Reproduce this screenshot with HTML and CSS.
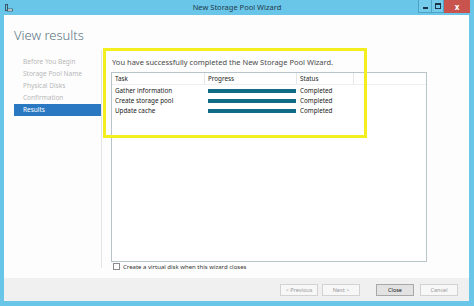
FILE: index.html
```html
<!DOCTYPE html>
<html>
<head>
    <title>New Storage Pool Wizard</title>
    <link rel="stylesheet" href="styles.css">
</head>
<body>
    <div class="window">
        <div class="titlebar">
            <svg class="app-icon" width="8" height="8" viewBox="0 0 8 8">
                <rect x="0.5" y="0.5" width="2" height="6" fill="none" stroke="#3a5566" stroke-width="1"/>
                <rect x="2.5" y="5" width="5" height="2" fill="#ffffff" stroke="#3a5566" stroke-width="0.8"/>
            </svg>
            <div class="title">New Storage Pool Wizard</div>
            <div class="controls">
                <div class="ctl ctl-min"><span></span></div>
                <div class="ctl ctl-max"><span></span></div>
                <div class="ctl ctl-close">x</div>
            </div>
        </div>

        <div class="client">
            <div class="heading">View results</div>

            <div class="body">
                <div class="nav">
                    <div class="nav-item">Before You Begin</div>
                    <div class="nav-item">Storage Pool Name</div>
                    <div class="nav-item">Physical Disks</div>
                    <div class="nav-item">Confirmation</div>
                    <div class="nav-item active">Results</div>
                </div>

                <div class="main">
                    <div class="message">You have successfully completed the New Storage Pool Wizard.</div>

                    <div class="list">
                        <div class="list-head">
                            <div class="col col-task">Task</div>
                            <div class="col col-progress">Progress</div>
                            <div class="col col-status">Status</div>
                            <div class="col col-rest"></div>
                        </div>
                        <div class="list-row">
                            <div class="col col-task">Gather information</div>
                            <div class="col col-progress"><div class="bar"></div></div>
                            <div class="col col-status">Completed</div>
                        </div>
                        <div class="list-row">
                            <div class="col col-task">Create storage pool</div>
                            <div class="col col-progress"><div class="bar"></div></div>
                            <div class="col col-status">Completed</div>
                        </div>
                        <div class="list-row">
                            <div class="col col-task">Update cache</div>
                            <div class="col col-progress"><div class="bar"></div></div>
                            <div class="col col-status">Completed</div>
                        </div>
                    </div>

                    <label class="check-row">
                        <span class="checkbox"></span>
                        Create a virtual disk when this wizard closes
                    </label>
                </div>
            </div>

            <div class="buttons">
                <button class="btn" disabled>&lt; Previous</button>
                <button class="btn" disabled>Next &gt;</button>
                <button class="btn btn-default">Close</button>
                <button class="btn" disabled>Cancel</button>
            </div>
        </div>

        <div class="highlight"></div>
    </div>
</body>
</html>
```

FILE: styles.css
```css
body {
    margin: 0;
    background: #6ac6e8;
    font-family: "Noto Sans", "Open Sans", sans-serif;
}
.window {
    position: relative;
    width: 474px;
    height: 306px;
    display: flex;
    flex-direction: column;
}
.titlebar {
    height: 15px;
    display: flex;
    align-items: center;
    position: relative;
}
.app-icon {
    margin-left: 5px;
}
.title {
    position: absolute;
    left: 0;
    right: 0;
    text-align: center;
    font-size: 7.5px;
    color: #1f3a4c;
    line-height: 15px;
}
.controls {
    position: absolute;
    top: 0;
    right: 4px;
    display: flex;
}
.ctl {
    height: 13px;
    display: flex;
    align-items: center;
    justify-content: center;
    box-sizing: border-box;
}
.ctl-min, .ctl-max {
    width: 13px;
    border: 1px solid #4da3c4;
    border-top: none;
    background: #74cbeb;
}
.ctl-min {
    border-right: none;
}
.ctl-min span {
    width: 5px;
    height: 2px;
    margin-top: 4px;
    background: #1d3444;
}
.ctl-max span {
    width: 4px;
    height: 3px;
    border: 1px solid #1d3444;
    border-top-width: 2px;
}
.ctl-close {
    width: 26px;
    background: #c9534d;
    color: #ffffff;
    font-size: 8px;
    font-weight: bold;
    line-height: 1;
}
.client {
    flex: 1;
    margin: 0 5px 5px 4px;
    background: #fdfdfd;
    display: flex;
    flex-direction: column;
}
.heading {
    height: 35px;
    padding-left: 10px;
    box-sizing: border-box;
    padding-top: 12px;
    font-size: 13px;
    font-weight: 300;
    color: #5a7584;
    line-height: 16px;
}
.body {
    flex: 1;
    display: flex;
}
.nav {
    width: 97px;
    padding-top: 6px;
    margin-bottom: 10px;
    border-right: 1px solid #e4e4e4;
}
.nav-item {
    margin-left: 10px;
    height: 12px;
    line-height: 12px;
    padding-left: 9px;
    font-size: 6.5px;
    color: #b8b8b8;
}
.nav-item.active {
    background: #2a78c2;
    color: #ffffff;
}
.main {
    flex: 1;
    padding: 6px 42px 0 9px;
}
.message {
    height: 12px;
    line-height: 12px;
    font-size: 7.5px;
    color: #4a4a4a;
    padding-left: 1px;
    margin-bottom: 4px;
}
.list {
    height: 190px;
    box-sizing: border-box;
    border: 1px solid #b8c4cc;
    background: #ffffff;
}
.list-head, .list-row {
    display: flex;
    font-size: 6.3px;
    color: #222222;
}
.list-head {
    height: 11px;
    line-height: 11px;
    border-bottom: 1px solid #eeeeee;
    margin-bottom: 1px;
}
.list-head .col {
    border-right: 1px solid #e6e6e6;
}
.list-row {
    height: 10px;
    line-height: 10px;
}
.col {
    padding-left: 3px;
    box-sizing: border-box;
    white-space: nowrap;
}
.col-task {
    width: 93px;
}
.col-progress {
    width: 92px;
    display: flex;
    align-items: center;
}
.col-status {
    width: 57px;
}
.col-rest {
    flex: 1;
}
.list-head .col-rest {
    border-right: none;
}
.bar {
    width: 88px;
    height: 4px;
    background: #106b87;
}
.check-row {
    display: flex;
    align-items: center;
    gap: 3px;
    height: 9px;
    margin-left: 2px;
    font-size: 6px;
    color: #333333;
}
.checkbox {
    width: 5px;
    height: 5px;
    border: 1px solid #8a8a8a;
    background: #ffffff;
}
.buttons {
    height: 23px;
    background: #f0f0f0;
    display: flex;
    align-items: center;
    justify-content: flex-end;
    padding-right: 11px;
    gap: 4px;
}
.btn {
    width: 38px;
    height: 12px;
    padding: 0;
    font-family: "Noto Sans", sans-serif;
    font-size: 5.5px;
    color: #9a9a9a;
    background: #f7f7f7;
    border: 1px solid #d2d2d2;
}
.btn-default {
    margin-left: 12px;
    margin-right: 2px;
    color: #1a1a1a;
    background: #e2e2e2;
    border-color: #a8a8a8;
}
.highlight {
    position: absolute;
    left: 103px;
    top: 48px;
    width: 264px;
    height: 90px;
    box-sizing: border-box;
    border: 3px solid #f3ef1f;
}
```
